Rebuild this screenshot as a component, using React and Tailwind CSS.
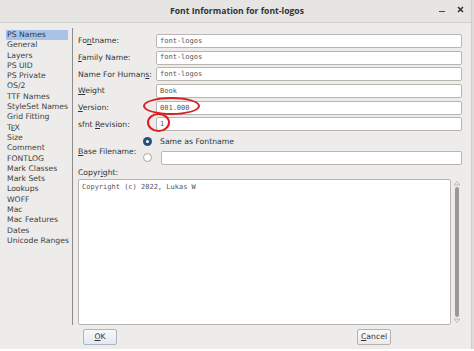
const SANS = { fontFamily: '"DejaVu Sans", sans-serif' }

const pages = [
  'PS Names', 'General', 'Layers', 'PS UID', 'PS Private', 'OS/2', 'TTF Names',
  'StyleSet Names', 'Grid Fitting', 'TeX', 'Size', 'Comment', 'FONTLOG',
  'Mark Classes', 'Mark Sets', 'Lookups', 'WOFF', 'Mac', 'Mac Features', 'Dates',
  'Unicode Ranges',
]

const fields = [
  { label: 'Fontname:', u: 2, value: 'font-logos' },
  { label: 'Family Name:', u: 0, value: 'font-logos' },
  { label: 'Name For Humans:', u: 14, value: 'font-logos' },
  { label: 'Weight', u: 0, value: 'Book' },
  { label: 'Version:', u: 0, value: '001.000' },
  { label: 'sfnt Revision:', u: 5, value: '1' },
]

const Mnemonic = ({ text, u }) => (
  <>
    {text.slice(0, u)}
    <span className="underline underline-offset-[1px]">{text[u]}</span>
    {text.slice(u + 1)}
  </>
)

const Field = ({ value, className = '' }) => (
  <div className={`h-[14px] bg-white border border-[#b9b6b2] rounded-[2px] flex items-center pl-[3px] text-[7px] text-[#555] font-['DejaVu_Sans_Mono',monospace] ${className}`}>
    {value}
  </div>
)

export default function App() {
  return (
    <div className="w-[474px] h-[351px] bg-white overflow-hidden text-[#2e3436] flex flex-col" style={SANS}>
      <div className="h-[349px] flex">
        <div className="w-[471px] bg-[#edecea] flex flex-col">
          {/* title bar */}
          <div className="h-[23px] shrink-0 bg-[#e6e5e3] border-b border-[#cfcdca] flex items-center relative">
            <div className="flex-1 text-center font-bold text-[8.6px] text-[#2e3436] font-['Open_Sans',sans-serif] pl-[3px]">
              Font Information for font-logos
            </div>
            <div className="absolute right-[7px] top-[6px] flex items-center gap-[12px] text-[#333]">
              <span className="w-[6px] h-[1.5px] bg-[#444] mt-[4px]" />
              <svg width="7" height="7" viewBox="0 0 7 7">
                <path d="M1 1 L6 6 M6 1 L1 6" stroke="#333" strokeWidth="1.6" />
              </svg>
            </div>
          </div>

          <div className="flex flex-1 min-h-0 text-[7.7px]">
            {/* page list */}
            <div className="w-[72px] shrink-0 pl-[6px] pt-[7px] pr-[4px]">
              {pages.map((p, i) => (
                <div
                  key={p}
                  className={`h-[10.3px] leading-[10.3px] pl-[1px] whitespace-nowrap ${i === 0 ? 'bg-[#a9c3e6] text-[#1e3a5f]' : 'text-[#3b3f40]'}`}
                >
                  {p === 'TeX' ? <>T<span className="relative top-[1.5px] -ml-[1px] -mr-[1px]">E</span>X</> : p}
                </div>
              ))}
            </div>

            {/* right side */}
            <div className="flex-1 flex flex-col">
              <div className="flex flex-1 min-h-0 pt-[5px]">
                <div className="w-px bg-[#8f8c88] mb-[3px]" />
                <div className="flex-1 flex flex-col pl-[5px] pr-[9px] pt-[6px]">
                  <div className="flex flex-col gap-[2.7px] relative">
                    {fields.map(f => (
                      <div key={f.label} className="flex items-center h-[14px]">
                        <div className="w-[78px] shrink-0 whitespace-nowrap">
                          <Mnemonic text={f.label} u={f.u} />
                        </div>
                        <Field value={f.value} className="flex-1" />
                      </div>
                    ))}
                    {/* red annotations */}
                    <div className="absolute left-[65px] top-[63px] w-[57px] h-[18px] border-[2px] border-[#d42020] rounded-[50%]" />
                    <div className="absolute left-[69px] top-[79px] w-[23px] h-[19px] border-[2px] border-[#d42020] rounded-[50%]" />
                  </div>

                  {/* base filename */}
                  <div className="flex items-center mt-[4px]">
                    <div className="w-[65px] shrink-0 whitespace-nowrap pt-[3px]">
                      <Mnemonic text="Base Filename:" u={0} />
                    </div>
                    <div className="flex-1 flex flex-col gap-[3px]">
                      <div className="flex items-center h-[13px]">
                        <span className="w-[9px] h-[9px] rounded-full bg-[#2a4d7c] flex items-center justify-center">
                          <span className="w-[3px] h-[3px] rounded-full bg-white" />
                        </span>
                        <span className="ml-[8px]">Same as Fontname</span>
                      </div>
                      <div className="flex items-center h-[13px]">
                        <span className="w-[9px] h-[9px] rounded-full bg-white border border-[#a8a5a1]" />
                        <Field value="" className="flex-1 ml-[9px]" />
                      </div>
                    </div>
                  </div>

                  {/* copyright */}
                  <div className="mt-[3px] h-[12px] leading-[12px]">
                    <Mnemonic text="Copyright:" u={5} />
                  </div>
                  <div className="flex flex-1 min-h-0 mb-[3px]">
                    <div className="flex-1 bg-white border border-[#b9b6b2] rounded-[2px] px-[3px] py-[3px] text-[7px] text-[#555] font-['DejaVu_Sans_Mono',monospace] leading-[9px]">
                      Copyright (c) 2022, Lukas W
                    </div>
                    <div className="w-[10px] flex flex-col items-center ml-[1px]">
                      <svg width="8" height="6" viewBox="0 0 8 6" className="mt-[1px]">
                        <path d="M1 5 L4 1.5 L7 5 Z" fill="none" stroke="#bdbab6" strokeWidth="1" />
                      </svg>
                      <div className="w-[4px] flex-1 bg-[#9a9895] rounded-[2px] my-[1px]" />
                      <svg width="8" height="6" viewBox="0 0 8 6" className="mb-[1px]">
                        <path d="M1 1 L4 4.5 L7 1 Z" fill="none" stroke="#bdbab6" strokeWidth="1" />
                      </svg>
                    </div>
                  </div>
                </div>
              </div>

              {/* buttons */}
              <div className="h-[21px] shrink-0 flex items-start pt-[1px] pl-[11px]">
                <button className="w-[34px] h-[16px] border border-[#a9b6c6] rounded-[2px] bg-gradient-to-b from-[#f7f9fb] to-[#e4e9ef] text-[7.7px] text-[#333]">
                  <Mnemonic text="OK" u={0} />
                </button>
                <button className="ml-[240px] w-[34px] h-[16px] border border-[#b5b2ae] rounded-[2px] bg-gradient-to-b from-[#fafaf9] to-[#eceae8] text-[7.7px] text-[#333]">
                  <Mnemonic text="Cancel" u={0} />
                </button>
              </div>
            </div>
          </div>
        </div>
        {/* edge of the window behind */}
        <div className="w-[3px] bg-[#dedcda] border-l border-[#d0cecb]" />
      </div>
    </div>
  )
}
